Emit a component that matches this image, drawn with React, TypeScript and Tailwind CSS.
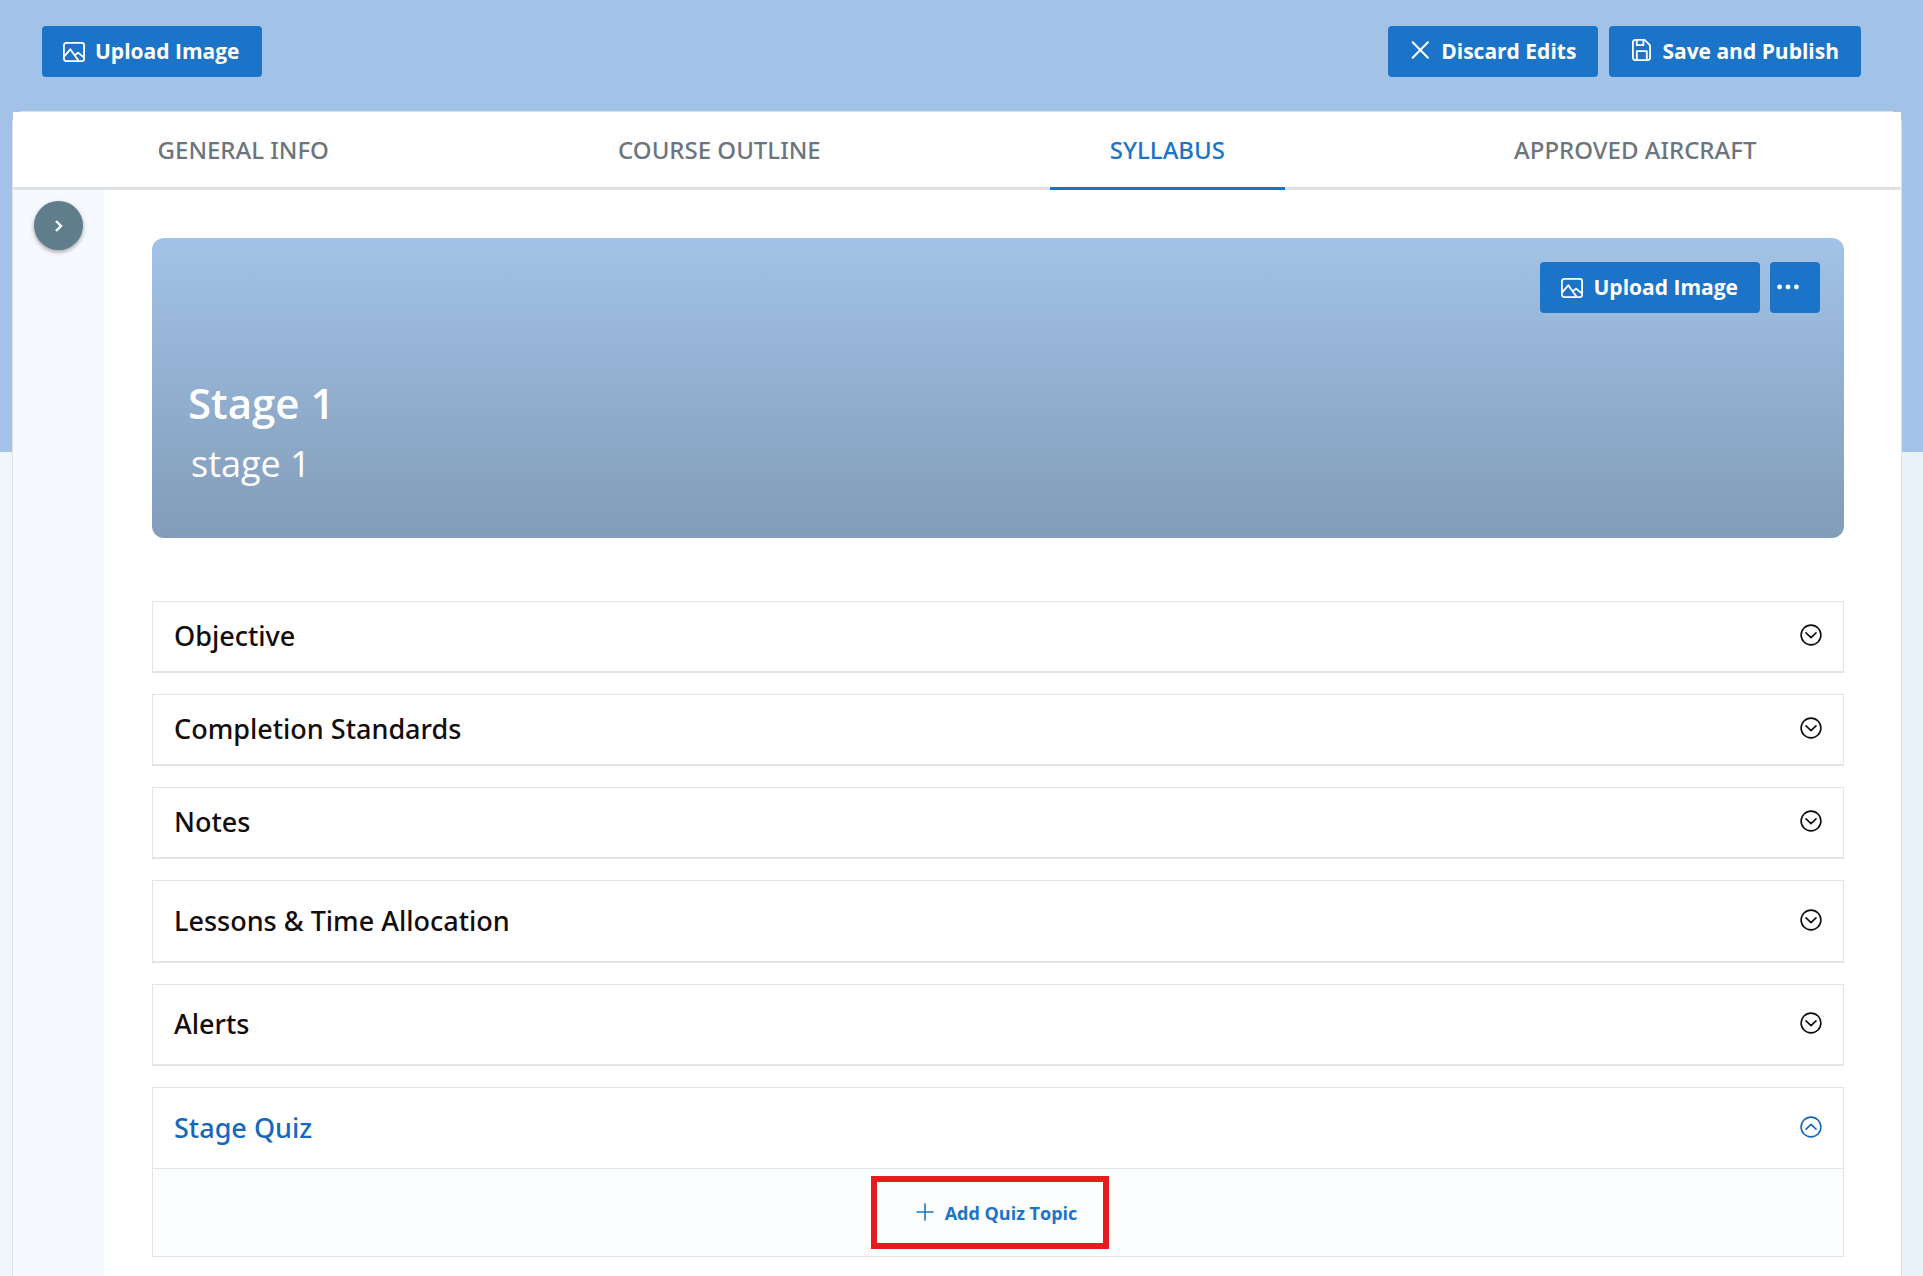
import type { ReactNode } from "react";

const tabs = ["GENERAL INFO", "COURSE OUTLINE", "SYLLABUS", "APPROVED AIRCRAFT"];

const sections = [
  { title: "Objective", size: "h-[72px]" },
  { title: "Completion Standards", size: "h-[72px]" },
  { title: "Notes", size: "h-[72px]" },
  { title: "Lessons & Time Allocation", size: "h-[83px]" },
  { title: "Alerts", size: "h-[82px]" },
];

function ImageIcon() {
  return (
    <svg
      viewBox="0 0 22 20"
      className="h-5 w-[22px]"
      fill="none"
      stroke="currentColor"
      strokeWidth="1.8"
      strokeLinejoin="round"
      aria-hidden="true"
    >
      <rect x="0.9" y="0.9" width="20.2" height="18.2" rx="2.4" />
      <path d="M1 14.6 L7.3 7.3 L15.5 18.6 M11.6 13.4 L15.1 10.6 L20.8 15.4" />
    </svg>
  );
}

function TimesIcon() {
  return (
    <svg
      viewBox="0 0 22 18"
      className="mb-[3px] h-[18px] w-[22px]"
      fill="none"
      stroke="currentColor"
      strokeWidth="2"
      strokeLinecap="round"
      aria-hidden="true"
    >
      <path d="M3.7 1.2 L18.9 16.8 M18.9 1.2 L3.7 16.8" />
    </svg>
  );
}

function SaveIcon() {
  return (
    <svg
      viewBox="0 0 22 22"
      className="mb-[3px] size-[22px]"
      fill="none"
      stroke="currentColor"
      strokeWidth="1.8"
      strokeLinejoin="round"
      aria-hidden="true"
    >
      <path d="M5.2 0.9 H14.6 L20.1 6.4 V18.8 A2.3 2.3 0 0 1 17.8 21.1 H5.2 A2.3 2.3 0 0 1 2.9 18.8 V3.2 A2.3 2.3 0 0 1 5.2 0.9 Z" />
      <path d="M6.8 1 V6.2 H13.4 V1 M6.8 21 V12.2 H16.8 V21" />
    </svg>
  );
}

function CircleChevronIcon({ open }: { open?: boolean }) {
  return (
    <svg
      viewBox="0 0 22 22"
      className="mb-[3px] size-[22px]"
      fill="none"
      stroke="currentColor"
      strokeWidth="1.6"
      strokeLinecap="round"
      strokeLinejoin="round"
      aria-hidden="true"
    >
      <circle cx="11" cy="11" r="9.9" />
      <path d={open ? "M6 13.2 L11 8.4 L16 13.2" : "M6 8.8 L11 13.6 L16 8.8"} />
    </svg>
  );
}

function PrimaryButton({ icon, children }: { icon: ReactNode; children: ReactNode }) {
  return (
    <button
      type="button"
      className="flex h-[51px] items-center gap-2.5 rounded bg-[#1b74c8] pr-[22px] pl-[21px] text-[21px] font-bold text-white"
    >
      {icon}
      {children}
    </button>
  );
}

export default function App() {
  return (
    <div className="relative min-h-screen bg-linear-to-r from-[#f0f6fb] to-[#e9f1f9] pr-[21px] pl-3 font-['Open_Sans',sans-serif]">
      {/* Cover band behind the card */}
      <div className="absolute inset-x-0 top-0 h-[452px] bg-[#a2c3e7]" />

      <div className="relative flex min-h-screen flex-col">
        <header className="flex items-center justify-between pt-[26px] pr-[41px] pb-[34px] pl-[30px]">
          <PrimaryButton icon={<ImageIcon />}>Upload Image</PrimaryButton>
          <div className="flex gap-[11px]">
            <PrimaryButton icon={<TimesIcon />}>Discard Edits</PrimaryButton>
            <PrimaryButton icon={<SaveIcon />}>Save and Publish</PrimaryButton>
          </div>
        </header>

        <div className="flex grow flex-col rounded-t-xl border border-b-0 border-[#dee2e6] bg-white">
          <nav className="flex h-[78px] justify-around border-b-[3px] border-[#dee2e6] bg-white">
            {tabs.map((tab) => (
              <a
                key={tab}
                href="#"
                className={`-mb-[3px] flex items-center border-b-[3px] px-[60px] font-['Noto_Sans',sans-serif] text-2xl font-medium ${
                  tab === "SYLLABUS"
                    ? "border-[#1b74c8] text-[#1b74c8]"
                    : "border-transparent text-[#6c757d]"
                }`}
              >
                {tab}
              </a>
            ))}
          </nav>

          <div className="flex grow">
            <aside className="w-[91px] shrink-0 bg-[#f6f9fe] pt-[11px] pl-[21px]">
              <button
                type="button"
                aria-label="Expand sidebar"
                className="flex size-[49px] items-center justify-center rounded-full bg-[#607d8b] text-white shadow-[0_2px_4px_rgba(0,0,0,0.35)]"
              >
                <svg
                  viewBox="0 0 8 12"
                  className="h-3 w-2"
                  fill="none"
                  stroke="currentColor"
                  strokeWidth="2.4"
                  aria-hidden="true"
                >
                  <path d="M1 1 L6 6 L1 11" />
                </svg>
              </button>
            </aside>

            <main className="min-w-0 grow pt-12 pr-[57px] pl-12">
              <div className="flex h-[300px] flex-col justify-between rounded-xl bg-linear-to-b from-[#a2c3e7] to-[#829cb9] px-6 pt-6 pb-11">
                <div className="flex justify-end gap-2.5">
                  <PrimaryButton icon={<ImageIcon />}>Upload Image</PrimaryButton>
                  <button
                    type="button"
                    aria-label="More actions"
                    className="flex h-[51px] w-[50px] items-center rounded bg-[#1b74c8] pl-[7px] text-white"
                  >
                    <svg viewBox="0 0 22 6" className="mb-0.5 h-1.5 w-[22px]" fill="currentColor" aria-hidden="true">
                      <circle cx="2.6" cy="3" r="2.4" />
                      <circle cx="11" cy="3" r="2.4" />
                      <circle cx="19.4" cy="3" r="2.4" />
                    </svg>
                  </button>
                </div>
                <div className="px-3 text-white">
                  <h1 className="text-[42px] leading-[62px] font-semibold">Stage 1</h1>
                  <p className="px-[3px] text-4xl leading-[60px]">stage 1</p>
                </div>
              </div>

              <div className="flex flex-col gap-[21px] pt-[63px] pb-[18px]">
                {sections.map((section) => (
                  <button
                    key={section.title}
                    type="button"
                    className={`flex items-center justify-between border border-b-2 border-[#e4e4e4] px-[21px] text-left font-['Noto_Sans',sans-serif] text-[27px] font-medium text-[#120c0c] ${section.size}`}
                  >
                    {section.title}
                    <CircleChevronIcon />
                  </button>
                ))}

                <section className="border border-[#e4e4e4]">
                  <button
                    type="button"
                    aria-expanded="true"
                    className="flex h-[81px] w-full items-center justify-between border-b border-[#e4e4e4] px-[21px] text-left font-['Noto_Sans',sans-serif] text-[27px] font-medium text-[#1668bd]"
                  >
                    Stage Quiz
                    <CircleChevronIcon open />
                  </button>
                  <div className="flex h-[87px] items-center justify-center bg-[#fcfdfe]">
                    <div className="relative">
                      <button
                        type="button"
                        className="flex h-[51px] items-center gap-[11px] pr-6 pl-[21px] text-lg font-bold text-[#1b74c8]"
                      >
                        <svg
                          viewBox="0 0 18 18"
                          className="mb-0.5 size-[18px]"
                          fill="none"
                          stroke="currentColor"
                          strokeWidth="1.6"
                          strokeLinecap="round"
                          aria-hidden="true"
                        >
                          <path d="M9 1 V17 M1 9 H17" />
                        </svg>
                        Add Quiz Topic
                      </button>
                      {/* Highlight frame */}
                      <div className="pointer-events-none absolute -inset-y-[11px] -right-2 -left-6 border-[6px] border-[#e81b1b]" />
                    </div>
                  </div>
                </section>
              </div>
            </main>
          </div>
        </div>
      </div>
    </div>
  );
}
